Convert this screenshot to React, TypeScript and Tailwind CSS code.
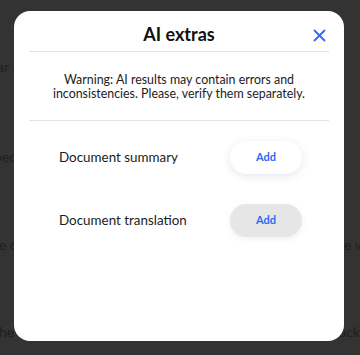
import React from "react";

function CloseIcon() {
  return (
    <svg width="13" height="13" viewBox="0 0 13 13" fill="none">
      <path d="M1.5 1.5 L11.5 11.5 M11.5 1.5 L1.5 11.5" stroke="#2c6bf0" strokeWidth="1.8" strokeLinecap="round" />
    </svg>
  );
}

function Row({ label, gray }: { label: string; gray?: boolean }) {
  return (
    <div className="flex items-center justify-between">
      <span className="text-[13.4px] text-[#1c1c1c]">{label}</span>
      <button
        className={
          gray
            ? "w-[72px] h-[33px] rounded-full bg-[#e6e6e6] text-[11px] font-bold text-[#2c6bf0] shadow-[0_2px_6px_rgba(30,60,120,0.08)]"
            : "w-[72px] h-[33px] rounded-full bg-white text-[11px] font-bold text-[#2c6bf0] shadow-[0_2px_8px_rgba(30,60,120,0.12)]"
        }
      >
        Add
      </button>
    </div>
  );
}

export default function App() {
  return (
    <div
      className="relative w-[360px] h-[355px] overflow-hidden bg-[#333333] text-[#1c1c1c]"
      style={{ fontFamily: "Lato, 'Noto Sans', sans-serif" }}
    >
      {/* dimmed page behind the modal */}
      <div className="flex flex-col text-[14px] text-[#1f1f1f] leading-[20px]">
        <div className="h-[57px]" />
        <div className="whitespace-nowrap -ml-[3px]">ar</div>
        <div className="h-[70px]" />
        <div className="whitespace-nowrap -ml-[6px]">pec</div>
        <div className="h-[68px]" />
        <div className="flex justify-between whitespace-nowrap">
          <span className="-ml-[1px]">e c</span>
          <span className="mr-[-6px]">re w</span>
        </div>
        <div className="h-[67px]" />
        <div className="flex justify-between whitespace-nowrap">
          <span className="-ml-[1px]">he</span>
          <span className="mr-[0px]">ack</span>
        </div>
      </div>

      {/* modal */}
      <div className="absolute left-[14px] top-[11px] w-[330px] h-[330px] rounded-[16px] bg-white px-[15px]">
        <div className="relative flex h-[40px] items-end justify-center pb-[3px]">
          <span className="text-[18px] font-bold text-[#111]">AI extras</span>
          <div className="absolute right-[3px] top-[18px]">
            <CloseIcon />
          </div>
        </div>
        <div className="h-px bg-[#e3e3e3]" />
        <div className="pt-[21px] pb-[19px] text-center text-[12.4px] leading-[14px] text-[#1c1c1c]">
          Warning: AI results may contain errors and
          <br />
          inconsistencies. Please, verify them separately.
        </div>
        <div className="h-px bg-[#e3e3e3]" />
        <div className="flex flex-col gap-[30px] pl-[30px] pr-[27px] pt-[20px]">
          <Row label="Document summary" />
          <Row label="Document translation" gray />
        </div>
      </div>
    </div>
  );
}
